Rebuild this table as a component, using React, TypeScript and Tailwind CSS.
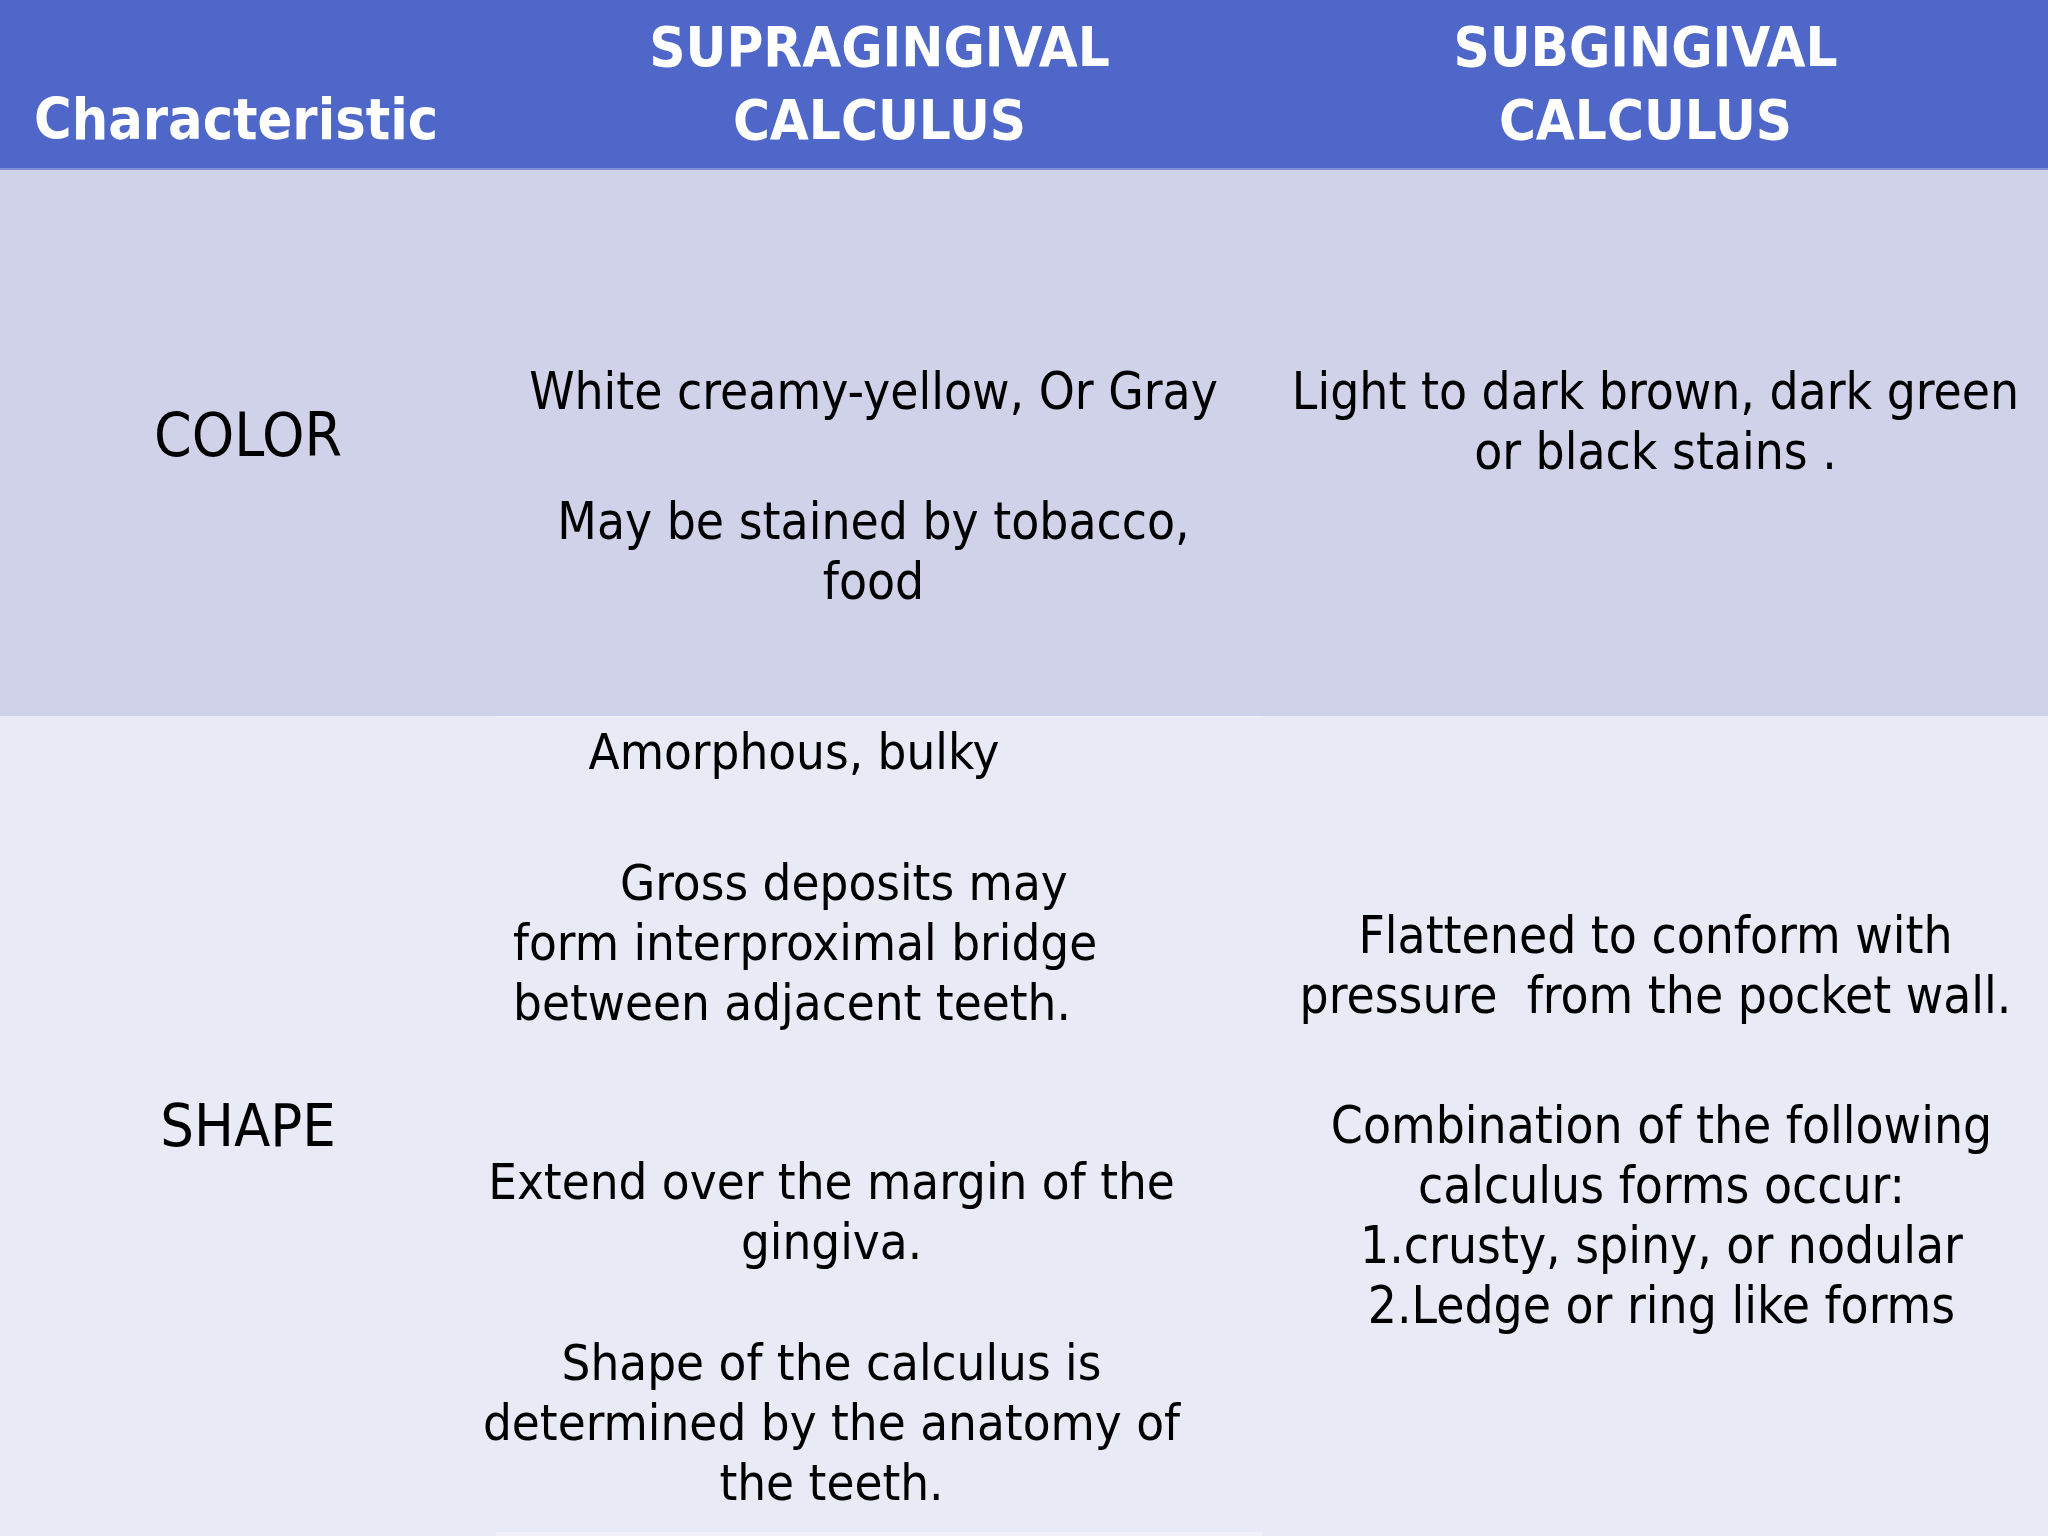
const FONT = "font-['DejaVu_Sans_Condensed','DejaVu_Sans',sans-serif] font-stretch-condensed";

function Lines({ lines, className = '' }: { lines: string[]; className?: string }) {
  return (
    <div className={`flex flex-col items-center ${className}`}>
      {lines.map(l => (
        <span key={l} className="whitespace-pre">{l}</span>
      ))}
    </div>
  );
}

export default function App() {
  return (
    <div className={`w-[2048px] h-[1536px] overflow-hidden text-black ${FONT}`}>
      <div className="grid grid-cols-[496px_767px_785px] grid-rows-[170px_546px_820px]">
        {/* Header */}
        <div className="bg-[#4e67c8] border-b-2 border-[#7d8fd6] flex items-end pl-[34px] pb-[12px]">
          <span className="text-white font-bold text-[57px] leading-[73px] whitespace-nowrap">Characteristic</span>
        </div>
        <div className="bg-[#4e67c8] border-b-2 border-[#7d8fd6] flex items-end justify-center pb-[12px]">
          <div className="text-white font-bold text-[56px] leading-[73px] text-center whitespace-nowrap">
            SUPRAGINGIVAL<br />CALCULUS
          </div>
        </div>
        <div className="bg-[#4e67c8] border-b-2 border-[#7d8fd6] flex items-end justify-center pb-[12px] pr-[20px]">
          <div className="text-white font-bold text-[56px] leading-[73px] text-center whitespace-nowrap">
            SUBGINGIVAL<br />CALCULUS
          </div>
        </div>

        {/* COLOR row */}
        <div className="bg-[#d0d2e9] flex items-center justify-center pb-[16px]">
          <span className="text-[60px] leading-[70px]">COLOR</span>
        </div>
        <div className="bg-[#d0d2e9] pt-[192px] pr-[12px] text-[51px] leading-[60px] text-center whitespace-nowrap">
          <p>White creamy-yellow, Or Gray</p>
          <p className="mt-[70px]">May be stained by tobacco,<br />food</p>
        </div>
        <div className="bg-[#d0d2e9] pt-[192px] text-[51px] leading-[60px] text-center whitespace-nowrap">
          <p>Light to dark brown, dark green<br />or black stains .</p>
        </div>

        {/* SHAPE row */}
        <div className="bg-[#e8eaf5] flex items-center justify-center">
          <span className="text-[59px] leading-[70px]">SHAPE</span>
        </div>
        <div className="bg-[#e8eaf5] border-t-2 border-b-4 border-[#f0f1f8] pt-[4px] text-[50.6px] leading-[60px] whitespace-nowrap">
          <Lines lines={['Amorphous, bulky']} className="pr-[171px]" />
          <p className="mt-[71px] pl-[17px] indent-[107px]">Gross deposits may<br />form interproximal bridge<br />between adjacent teeth.</p>
          <Lines lines={['Extend over the margin of the', 'gingiva.']} className="mt-[119px] pr-[96px]" />
          <Lines lines={['Shape of the calculus is', 'determined by the anatomy of', 'the teeth.']} className="mt-[61px] pr-[96px]" />
        </div>
        <div className="bg-[#e8eaf5] pt-[190px] text-[51px] leading-[60px] text-center whitespace-pre">
          <p>Flattened to conform with{"\n"}pressure  from the pocket wall.</p>
          <p className="mt-[70px] pl-[12px]">Combination of the following{"\n"}calculus forms occur:{"\n"}1.crusty, spiny, or nodular{"\n"}2.Ledge or ring like forms</p>
        </div>
      </div>
    </div>
  );
}
